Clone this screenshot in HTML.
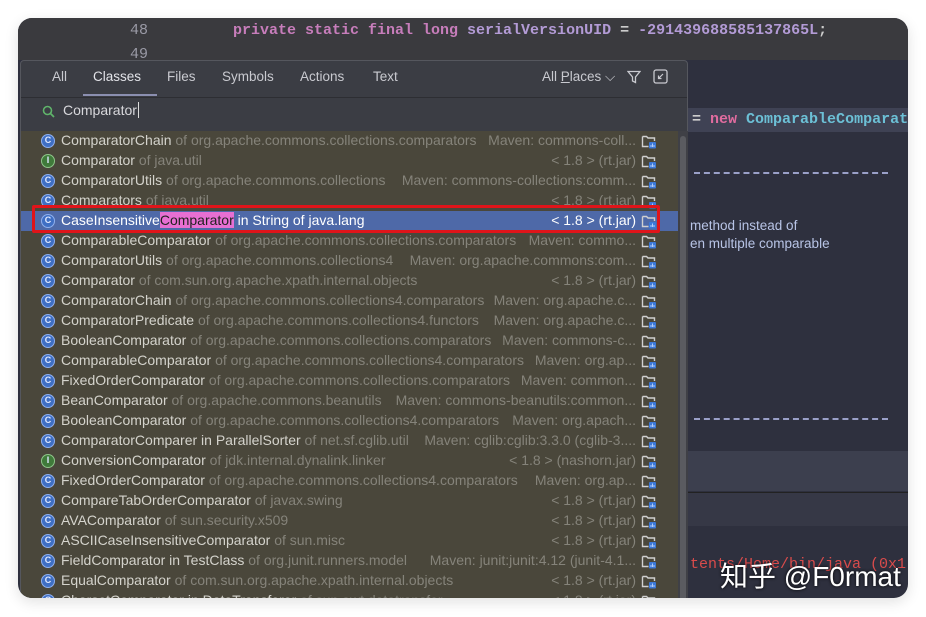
<!DOCTYPE html>
<html><head><meta charset="utf-8"><style>
*{margin:0;padding:0;box-sizing:border-box}
body{width:926px;height:617px;background:#fff;position:relative;overflow:hidden;font-family:"Liberation Sans",sans-serif}
#win{position:absolute;left:18px;top:18px;width:890px;height:580px;border-radius:14px;overflow:hidden;background:#2e303e;box-shadow:0 4px 14px rgba(0,0,0,.12)}
.code{position:absolute;font-family:"Liberation Mono",monospace;font-size:15px;white-space:pre}
#pop{position:absolute;left:2px;top:42px;width:668px;height:540px;background:#3b3d44;border:1px solid #55575e;border-radius:4px 4px 0 0}
.tab{position:absolute;top:8px;font-size:13.5px;color:#c9cad0}
#list{position:absolute;left:0;top:70px;width:657px;height:470px;background:#4a473b;overflow:hidden}
.row{position:absolute;left:0;width:657px;height:20px;font-size:14px;line-height:19px;white-space:nowrap}
.ic{position:absolute;left:20px;top:3px;width:14px;height:14px;border-radius:50%;background:#3f6fc4;border:1.5px solid #8fb0ee;color:#dfe8ff;font-size:9px;line-height:11px;text-align:center;font-weight:bold}
.ic.g{background:#3f7a3a;border-color:#8fc58a}
.nm{position:absolute;left:40px;color:#d4d3cc}
.of{color:#85837a}
.rt{position:absolute;right:42px;color:#85837a}
.fd{position:absolute;right:21px;top:3px}
</style></head><body>
<div id="win">
 <div style="position:absolute;left:0;top:0;width:890px;height:42px;background:#3a3a3e"></div>
 <div class="code" style="left:112px;top:4px;color:#9a9aa6">48</div>
 <div class="code" style="left:112px;top:28px;color:#9a9aa6">49</div>
 <div class="code" style="left:215px;top:4px;color:#c77dbb;font-weight:bold">private static final long <span style="color:#b39bd6">serialVersionUID</span> <span style="color:#ccc">=</span> <span style="color:#b39bd6">-291439688585137865L</span><span style="color:#ccc">;</span></div>
 <div style="position:absolute;left:670px;top:90px;width:220px;height:24px;background:#3f4254"></div>
 <div class="code" style="left:674px;top:93px;color:#ccc;font-weight:bold">= <span style="color:#e06c9f">new</span> <span style="color:#6cc0d6">ComparableComparat</span></div>
 <div style="position:absolute;left:676px;top:154px;width:194px;border-top:2px dashed #9aa0c8"></div>
 <div style="position:absolute;left:672px;top:199px;font-size:13.5px;color:#b8c4e6;line-height:18px">method instead of<br>en multiple comparable</div>
 <div style="position:absolute;left:676px;top:400px;width:194px;border-top:2px dashed #9aa0c8"></div>
 <div style="position:absolute;left:670px;top:433px;width:220px;height:40px;background:#3c3f4e"></div>
 <div style="position:absolute;left:670px;top:474px;width:220px;height:34px;background:#363846;border-top:1px solid #222"></div>
 <div class="code" style="left:672px;top:538px;color:#d94b4b">tents/Home/bin/java (0x1</div>
 <div style="position:absolute;left:702px;top:537px;font-family:'Liberation Sans','Noto Sans CJK SC',sans-serif;font-size:28px;color:#fff;text-shadow:0 0 3px #000">知乎 @F0rmat</div>
 <div id="pop">
  <div class="tab" style="left:31px">All</div>
  <div class="tab" style="left:72px;color:#e2e3e8">Classes</div>
  <div style="position:absolute;left:62px;top:33px;width:74px;height:2px;background:#8b8fb0"></div>
  <div class="tab" style="left:146px">Files</div>
  <div class="tab" style="left:201px">Symbols</div>
  <div class="tab" style="left:279px">Actions</div>
  <div class="tab" style="left:352px">Text</div>
  <div class="tab" style="left:521px">All <u>P</u>laces ⌵</div>
  <svg style="position:absolute;left:606px;top:9px" width="14" height="14" viewBox="0 0 14 14"><path d="M1 1.5h12L8.5 7v5.5L5.5 11V7z" fill="none" stroke="#c9cad0" stroke-width="1.3"/></svg>
  <svg style="position:absolute;left:632px;top:8px" width="15" height="15" viewBox="0 0 15 15"><rect x="1" y="1" width="13" height="13" rx="2" fill="none" stroke="#c9cad0" stroke-width="1.3"/><path d="M10 5L5.5 9.5M5.5 6.5v3h3" fill="none" stroke="#c9cad0" stroke-width="1.2"/></svg>
  <div style="position:absolute;left:0;top:36px;width:666px;height:1px;background:#2d2e33"></div>
  <svg style="position:absolute;left:21px;top:44px" width="13" height="13" viewBox="0 0 13 13"><circle cx="5.5" cy="5.5" r="4" fill="none" stroke="#5fb36a" stroke-width="1.6"/><path d="M8.5 8.5L12 12" stroke="#5fb36a" stroke-width="1.8"/></svg>
  <div style="position:absolute;left:42px;top:41px;color:#d8d8dc;font-size:14px">Comparator<span style="border-left:1px solid #ddd;margin-left:1px"></span></div>
  <div id="list"></div>
  <div style="position:absolute;left:657px;top:70px;width:10px;height:470px;background:#3f4046"></div>
  <div style="position:absolute;left:659px;top:75px;width:6px;height:465px;background:#5a5b60;border-radius:3px"></div>
 </div>
 <div style="position:absolute;left:14px;top:187px;width:628px;height:28px;border:3px solid #e0141a;border-radius:2px"></div>
</div>
<script>
const rows=[
["ComparatorChain","of org.apache.commons.collections.comparators","Maven: commons-coll...",0],
["Comparator","of java.util","&lt; 1.8 &gt; (rt.jar)",1],
["ComparatorUtils","of org.apache.commons.collections","Maven: commons-collections:comm...",0],
["Comparators","of java.util","&lt; 1.8 &gt; (rt.jar)",0],
["SEL","","",0],
["ComparableComparator","of org.apache.commons.collections.comparators","Maven: commo...",0],
["ComparatorUtils","of org.apache.commons.collections4","Maven: org.apache.commons:com...",0],
["Comparator","of com.sun.org.apache.xpath.internal.objects","&lt; 1.8 &gt; (rt.jar)",0],
["ComparatorChain","of org.apache.commons.collections4.comparators","Maven: org.apache.c...",0],
["ComparatorPredicate","of org.apache.commons.collections4.functors","Maven: org.apache.c...",0],
["BooleanComparator","of org.apache.commons.collections.comparators","Maven: commons-c...",0],
["ComparableComparator","of org.apache.commons.collections4.comparators","Maven: org.ap...",0],
["FixedOrderComparator","of org.apache.commons.collections.comparators","Maven: common...",0],
["BeanComparator","of org.apache.commons.beanutils","Maven: commons-beanutils:common...",0],
["BooleanComparator","of org.apache.commons.collections4.comparators","Maven: org.apach...",0],
["ComparatorComparer in ParallelSorter","of net.sf.cglib.util","Maven: cglib:cglib:3.3.0 (cglib-3....",0],
["ConversionComparator","of jdk.internal.dynalink.linker","&lt; 1.8 &gt; (nashorn.jar)",1],
["FixedOrderComparator","of org.apache.commons.collections4.comparators","Maven: org.ap...",0],
["CompareTabOrderComparator","of javax.swing","&lt; 1.8 &gt; (rt.jar)",0],
["AVAComparator","of sun.security.x509","&lt; 1.8 &gt; (rt.jar)",0],
["ASCIICaseInsensitiveComparator","of sun.misc","&lt; 1.8 &gt; (rt.jar)",0],
["FieldComparator in TestClass","of org.junit.runners.model","Maven: junit:junit:4.12 (junit-4.1...",0],
["EqualComparator","of com.sun.org.apache.xpath.internal.objects","&lt; 1.8 &gt; (rt.jar)",0],
["CharsetComparator in DataTransferer","of sun.awt.datatransfer","&lt; 1.8 &gt; (rt.jar)",0]];
const fd='<svg class="fd" width="16" height="15" viewBox="0 0 16 15"><path d="M1.5 2.5h4l1.5 1.5h6.5v3M1.5 2.5v10h6" fill="none" stroke="#d0d0d0" stroke-width="1.4"/><rect x="8" y="8" width="7" height="6.5" rx="1" fill="#3b78d8"/><path d="M10 13v-2M11.5 13v-3.5M13 13v-2" stroke="#cfe0ff" stroke-width=".8"/></svg>';
let h="";
rows.forEach((r,i)=>{const y=i*20;
if(r[0]=="SEL"){h+=`<div class="row" style="top:${y}px;background:#4e69a8"><div class="ic">C</div><div class="nm" style="color:#fff">CaseInsensitive<span style="background:#e76fd2;color:#222">Comparator</span> in String of java.lang</div><div class="rt" style="color:#fff">&lt; 1.8 &gt; (rt.jar)</div>${fd}</div>`;return;}
h+=`<div class="row" style="top:${y}px"><div class="ic ${r[3]?'g':''}">${r[3]?'I':'C'}</div><div class="nm">${r[0]} <span class="of">${r[1]}</span></div><div class="rt">${r[2]}</div>${fd}</div>`;});
document.getElementById('list').innerHTML=h;
</script>
</body></html>
